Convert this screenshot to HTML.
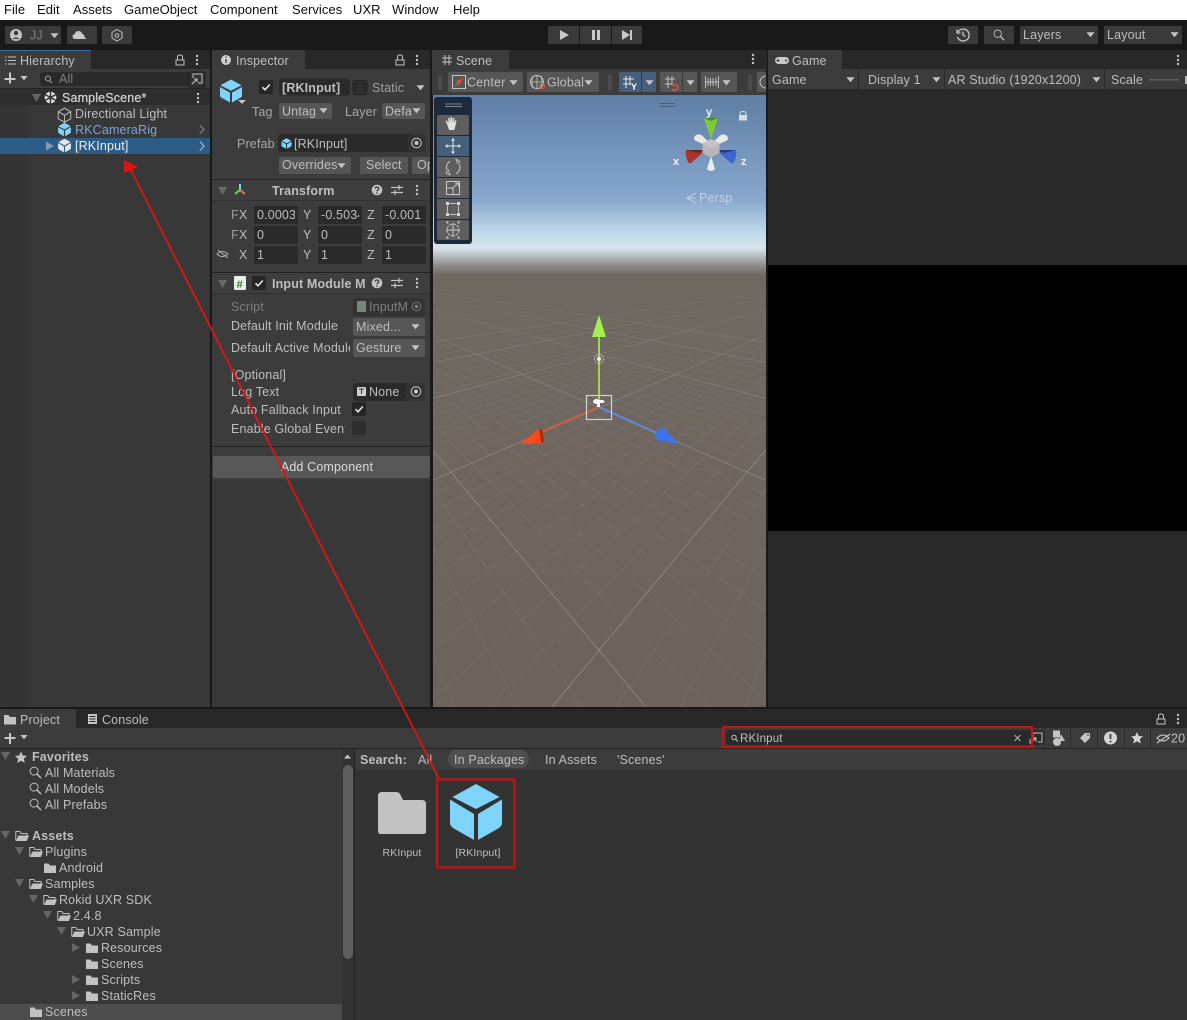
<!DOCTYPE html>
<html><head><meta charset="utf-8"><title>Unity</title>
<style>
html,body{margin:0;padding:0;background:#191919;width:1187px;height:1020px;overflow:hidden}
svg{position:absolute;left:0;top:0;display:block}
text{font-family:"Liberation Sans","DejaVu Sans",sans-serif;font-size:12.5px;fill:#bebebe;white-space:pre;letter-spacing:.15px}
.b{font-weight:bold}.d{fill:#808080}.m{font-size:13px;fill:#0c0c0c;letter-spacing:.05px}.s{font-size:10.5px}
</style></head><body>
<svg width="1187" height="1020" viewBox="0 0 1187 1020" xmlns="http://www.w3.org/2000/svg">
<defs>
<linearGradient id="sky" x1="0" y1="95" x2="0" y2="707" gradientUnits="userSpaceOnUse">
<stop offset="0" stop-color="#5f7ea6"/><stop offset=".17" stop-color="#88a7cd"/><stop offset=".225" stop-color="#c0d9ea"/><stop offset=".25" stop-color="#d8e6ec"/><stop offset=".278" stop-color="#8f8f8e"/><stop offset=".295" stop-color="#6f6861"/><stop offset="1" stop-color="#6c635c"/>
</linearGradient>
<linearGradient id="fade" x1="0" y1="270" x2="0" y2="430" gradientUnits="userSpaceOnUse"><stop offset="0" stop-color="#6f6861"/><stop offset=".25" stop-color="#6f6861" stop-opacity=".7"/><stop offset="1" stop-color="#6e655f" stop-opacity="0"/></linearGradient>
<clipPath id="scn"><rect x="433" y="274" width="333" height="433"/></clipPath>
<clipPath id="c1"><rect x="254" y="205" width="41" height="60"/></clipPath>
<clipPath id="c2"><rect x="318" y="205" width="41" height="60"/></clipPath>
<clipPath id="c3"><rect x="272" y="275" width="93" height="18"/></clipPath>
<clipPath id="c4"><rect x="231" y="340" width="119" height="16"/></clipPath>
<clipPath id="c5"><rect x="231" y="420" width="114" height="16"/></clipPath>
<clipPath id="c6"><rect x="212" y="155" width="218" height="20"/></clipPath>
<clipPath id="c7"><rect x="360" y="380" width="44" height="20"/></clipPath>
<clipPath id="c8"><rect x="369" y="298" width="39" height="18"/></clipPath>
<symbol id="cube" viewBox="0 0 24 24"><path fill="#7fd4fb" d="M12 .5 22.500 6.300 12 11.800 1.500 6.300ZM1 8 11 13.600V23.500L3 19Q1 18 1 16.500ZM23 8 13 13.600V23.500l8-4.500q2-1 2-2.500Z"/></symbol>
<symbol id="cubew" viewBox="0 0 24 24"><path fill="#e6e6e6" d="M12 .5 22.500 6.300 12 11.800 1.500 6.300ZM1 8 11 13.600V23.500L3 19Q1 18 1 16.500ZM23 8 13 13.600V23.500l8-4.500q2-1 2-2.500Z"/></symbol>
<symbol id="fo" viewBox="0 0 14 12"><path fill="#c2c2c2" d="M1 1.500h4.500L7 3.500h6V11H1Z"/></symbol>
<symbol id="fop" viewBox="0 0 14 12"><path fill="none" stroke="#c2c2c2" stroke-width="1" d="M.8 10.500V1.500h4l1.200 2h6v2"/><path fill="#c2c2c2" d="M3.500 5.500H14L11.800 11H.9Z"/></symbol>
<symbol id="mag" viewBox="0 0 14 14"><circle cx="5.500" cy="5.500" r="4.300" fill="none" stroke="#c4c4c4" stroke-width="1"/><path d="M8.800 8.800 13 13" stroke="#c4c4c4" stroke-width="1.500"/></symbol>
<symbol id="sl" viewBox="0 0 10 10"><path fill="#c4c4c4" d="M.5 2.500h9L5 8Z"/></symbol>
<symbol id="dots" viewBox="0 0 4 12"><circle cx="2" cy="2" r="1.200" fill="#c4c4c4"/><circle cx="2" cy="6" r="1.200" fill="#c4c4c4"/><circle cx="2" cy="10" r="1.200" fill="#c4c4c4"/></symbol>
<symbol id="lock" viewBox="0 0 10 12"><path fill="none" stroke="#c4c4c4" stroke-width="1" d="M1 6h8v5H1ZM2.500 6V2.800Q2.500 1 5 1t2.500 1.800V6"/></symbol>
<symbol id="help" viewBox="0 0 12 12"><circle cx="6" cy="6" r="5.300" fill="#c4c4c4"/><path d="M4.200 4.600Q4.300 3 6 3t1.800 1.500Q7.800 5.400 6.700 6 6 6.400 6 7.400" fill="none" stroke="#3c3c3c" stroke-width="1.300"/><circle cx="6" cy="9" r=".8" fill="#3c3c3c"/></symbol>
<symbol id="sliders" viewBox="0 0 12 12"><path stroke="#c4c4c4" stroke-width="1.200" fill="none" d="M0 3.500h12M0 8.500h12M8 1v5M4 6v5"/></symbol>
<symbol id="target" viewBox="0 0 12 12"><circle cx="6" cy="6" r="4.800" fill="none" stroke="#c4c4c4" stroke-width="1"/><circle cx="6" cy="6" r="2" fill="#c4c4c4"/></symbol>
<symbol id="chk" viewBox="0 0 14 14"><rect width="14" height="14" rx="2" fill="#262626"/><path d="M3.500 7.200 6 9.800 10.800 4.500" fill="none" stroke="#e4e4e4" stroke-width="1.600"/></symbol>
<g id="gridm"><path d="M915 270L872 707M915 270L808 707M915 270L744 707M915 270L680 707M915 270L616 707M915 270L488 707M915 270L424 707M915 270L360 707M915 270L296 707M915 270L232 707M915 270L168 707M915 270L104 707M915 270L40 707M915 270L-24 707M915 270L-152 707M915 270L-216 707M915 270L-280 707M915 270L-344 707M915 270L-408 707M915 270L-472 707M915 270L-536 707M915 270L-600 707M915 270L-664 707M915 270L-792 707M915 270L-920 707M915 270L-1050 707M915 270L-1200 707M915 270L-1550 707M915 270L-1800 707" stroke="#8d857f" stroke-opacity=".28" stroke-width="1" fill="none"/><path d="M915 270L552 707M915 270L-88 707M915 270L-728 707M915 270L-1368 707M915 270L-2008 707" stroke="#a29b95" stroke-opacity=".55" stroke-width="1" fill="none"/></g>
</defs>

<!-- base -->
<rect width="1187" height="1020" fill="#191919"/>
<rect width="1187" height="20" fill="#fff"/>
<text class="m" x="4" y="14">File</text><text class="m" x="37" y="14">Edit</text><text class="m" x="73" y="14">Assets</text><text class="m" x="124" y="14">GameObject</text><text class="m" x="210" y="14">Component</text><text class="m" x="292" y="14">Services</text><text class="m" x="353" y="14">UXR</text><text class="m" x="392" y="14">Window</text><text class="m" x="453" y="14">Help</text>

<!-- top toolbar -->
<rect x="5" y="26" width="56" height="18" rx="1" fill="#3a3a3a"/><circle cx="16" cy="35" r="6" fill="#c4c4c4"/><circle cx="16" cy="33" r="2.200" fill="#3a3a3a"/><path d="M12.500 39q3.500-3.500 7 0" fill="#3a3a3a"/><text x="30" y="39.500" class="d">JJ</text><use href="#sl" x="50" y="31" width="9" height="9"/>
<rect x="67" y="26" width="30" height="18" rx="1" fill="#3a3a3a"/><path fill="#c8c8c8" d="M75 40q-2.500-.200-2.500-2.500 0-2 2.200-2.500.800-3 3.800-3t3.800 3q2.200.500 2.200 2.500T87.500 40Z" transform="translate(0 -1)"/>
<rect x="102" y="26" width="30" height="18" rx="1" fill="#3a3a3a"/><path fill="none" stroke="#c4c4c4" d="M117 29.500l5 3v5.500l-5 3-5-3v-5.500Z"/><circle cx="117" cy="35.500" r="1.800" fill="none" stroke="#c4c4c4"/>
<rect x="548" y="26" width="31" height="18" fill="#3a3a3a"/><rect x="580" y="26" width="31" height="18" fill="#3a3a3a"/><rect x="612" y="26" width="30" height="18" fill="#3a3a3a"/>
<path fill="#c8c8c8" d="M560 30l9 5-9 5Z"/><path fill="#c8c8c8" d="M592 30h3v10h-3ZM597 30h3v10h-3Z"/><path fill="#c8c8c8" d="M622 30l8 5-8 5ZM630 30h2v10h-2Z"/>
<rect x="948" y="26" width="30" height="18" fill="#3a3a3a"/><path d="M958 32a6 6 0 1 1 -.500 5M957 29.500v3.500h3.500M963 31.500V35l2.500 1.500" fill="none" stroke="#c8c8c8" stroke-width="1.300"/>
<rect x="984" y="26" width="30" height="18" fill="#3a3a3a"/><use href="#mag" x="993" y="29" width="12" height="12"/>
<rect x="1020" y="26" width="78" height="18" fill="#3a3a3a"/><text x="1023" y="39">Layers</text><use href="#sl" x="1086" y="30" width="9" height="9"/>
<rect x="1104" y="26" width="78" height="18" fill="#3a3a3a"/><text x="1107" y="39">Layout</text><use href="#sl" x="1170" y="30" width="9" height="9"/>

<!-- hierarchy -->
<rect x="0" y="50" width="210" height="19" fill="#282828"/>
<rect x="0" y="51" width="91" height="18" fill="#3c3c3c"/><rect x="0" y="50" width="91" height="1" fill="#3a6fa6"/>
<path d="M8 57h8M8 60.500h8M8 64h8" stroke="#c4c4c4"/><path d="M5 57h1.500M5 60.500h1.500M5 64h1.500" stroke="#c4c4c4"/>
<text x="20" y="65">Hierarchy</text>
<use href="#lock" x="175" y="54" width="10" height="12"/><use href="#dots" x="195" y="54" width="4" height="12"/>
<rect x="0" y="69" width="210" height="20" fill="#3c3c3c"/><rect x="0" y="88" width="210" height="1" fill="#232323"/>
<path d="M10 72.500v11M4.500 79h11" stroke="#c8c8c8" stroke-width="2"/><use href="#sl" x="20" y="74" width="8" height="8"/>
<rect x="40" y="72" width="165" height="14" rx="3" fill="#2a2a2a"/><text x="59" y="83" class="d" font-size="11">All</text><circle cx="48" cy="78.500" r="2.500" fill="none" stroke="#aaa"/><path d="M50 81l2 2" stroke="#aaa"/>
<rect x="189" y="72" width="16" height="15" rx="1" fill="#333" stroke="#1f1f1f"/><path d="M193 78v-4h9v9h-4M192 84l5-5M194 79h3v3" stroke="#c4c4c4" fill="none"/>
<rect x="0" y="89" width="210" height="618" fill="#383838"/><rect x="0" y="89" width="28" height="618" fill="#343434"/>
<rect x="0" y="89" width="210" height="16" fill="#2e2e2e"/>
<path d="M32 94h9l-4.500 8Z" fill="#666"/>
<circle cx="50.500" cy="97.500" r="5.800" fill="#dedede"/><path d="M50.500 91.500v12M45 94.500l11 6M56 94.500l-11 6" stroke="#2e2e2e" stroke-width="1.400"/>
<text x="62" y="102" style="fill:#d2d2d2;stroke:#d2d2d2;stroke-width:.25">SampleScene*</text>
<use href="#dots" x="196" y="92" width="4" height="12"/>
<path d="M64.500 108.200l6.300 3.500v7l-6.300 3.500-6.300-3.500v-7Zm-6.300 3.500l6.300 3.500 6.300-3.500m-6.300 3.500v7.500" fill="none" stroke="#c4c4c4" stroke-width=".9"/>
<text x="75" y="118">Directional Light</text>
<use href="#cube" x="57.500" y="122" width="14" height="15"/><text x="75" y="134" style="fill:#79a5dc">RKCameraRig</text>
<path d="M200 125.500l4 4-4 4" stroke="#7b7b7b" stroke-width="1.300" fill="none"/>
<rect x="0" y="138" width="210" height="16" fill="#2c5d87"/>
<path d="M46 141.500l8 4.500-8 4.500Z" fill="#7e9cb6"/><use href="#cubew" x="57.500" y="138" width="14" height="15"/>
<text x="75" y="150" style="fill:#eee">[RKInput]</text>
<path d="M200 141.500l4 4.500-4 4.500" stroke="#9ab5cc" stroke-width="1.300" fill="none"/>

<!-- inspector -->
<rect x="212" y="50" width="218" height="19" fill="#282828"/><rect x="212" y="50" width="93" height="19" rx="1" fill="#3c3c3c"/>
<circle cx="226" cy="60" r="5" fill="#d0d0d0"/><path d="M226 59v4M226 56.500v1.300" stroke="#3c3c3c" stroke-width="1.300"/>
<text x="236" y="65">Inspector</text>
<use href="#lock" x="395" y="54" width="10" height="12"/><use href="#dots" x="415" y="54" width="4" height="12"/>
<rect x="212" y="69" width="218" height="638" fill="#3c3c3c"/>
<rect x="212" y="480" width="218" height="227" fill="#383838"/>
<use href="#cube" x="219" y="79" width="24" height="24"/><path d="M238 100h8l-4 4Z" fill="#c4c4c4"/>
<use href="#chk" x="259" y="80" width="14" height="14"/>
<rect x="279" y="78.500" width="71" height="17" rx="3" fill="#2a2a2a"/><text x="282" y="92" class="b">[RKInput]</text>
<rect x="353" y="80.500" width="14" height="14" rx="2" fill="#2d2d2d" stroke="#242424"/><text x="372" y="92" style="fill:#a0a0a0">Static</text><use href="#sl" x="416" y="83" width="9" height="9"/>
<text x="252" y="116" style="fill:#a8a8a8">Tag</text><rect x="279" y="103" width="53" height="16" rx="2" fill="#565656"/><text x="282" y="115.500">Untag</text><use href="#sl" x="319" y="106" width="9" height="9"/>
<text x="345" y="116" style="fill:#a8a8a8">Layer</text><rect x="382" y="103" width="43" height="16" rx="2" fill="#565656"/><text x="385" y="115.500">Defa</text><use href="#sl" x="412" y="106" width="9" height="9"/>
<text x="237" y="148" style="fill:#a8a8a8">Prefab</text><rect x="278" y="134" width="148" height="18" rx="3" fill="#2a2a2a"/><rect x="408" y="134" width="18" height="18" rx="3" fill="#323232"/><use href="#cube" x="281" y="138" width="11" height="11"/><text x="294" y="148">[RKInput]</text><use href="#target" x="410.500" y="137" width="12" height="12"/>
<rect x="279" y="157" width="72" height="17" rx="2" fill="#565656"/><text x="282" y="169">Overrides</text><use href="#sl" x="337" y="161" width="9" height="9"/>
<rect x="360" y="157" width="48" height="17" rx="2" fill="#565656"/><text x="366" y="169">Select</text>
<rect x="412" y="157" width="18" height="17" fill="#565656"/><text x="417" y="169" clip-path="url(#c6)">Op</text>

<rect x="212" y="179" width="218" height="1" fill="#232323"/><rect x="212" y="180" width="218" height="20" fill="#3e3e3e"/><rect x="212" y="200" width="218" height="1" fill="#303030"/>
<path d="M218 187h9l-4.500 8Z" fill="#6a6a6a"/>
<path d="M240 184v7" stroke="#75d4e8" stroke-width="2"/><path d="M240 190l-5 4" stroke="#6fcf6a" stroke-width="2"/><path d="M240 190l5 4" stroke="#e37650" stroke-width="2"/>
<text x="272" y="195" class="b">Transform</text>
<use href="#help" x="371" y="184" width="12" height="12"/><use href="#sliders" x="391" y="184" width="12" height="12"/><use href="#dots" x="415" y="184" width="4" height="12"/>

<text x="231" y="219" style="fill:#9a9a9a">F</text><text x="239" y="219">X</text><rect x="254" y="206" width="44" height="18" rx="2" fill="#2a2a2a"/><text x="257" y="219" clip-path="url(#c1)">0.0003</text>
<text x="303" y="219">Y</text><rect x="318" y="206" width="44" height="18" rx="2" fill="#2a2a2a"/><text x="321" y="219" clip-path="url(#c2)">-0.5034</text>
<text x="367" y="219">Z</text><rect x="382" y="206" width="44" height="18" rx="2" fill="#2a2a2a"/><text x="385" y="219">-0.001</text>
<text x="231" y="239" style="fill:#9a9a9a">F</text><text x="239" y="239">X</text><rect x="254" y="226" width="44" height="18" rx="2" fill="#2a2a2a"/><text x="257" y="239">0</text>
<text x="303" y="239">Y</text><rect x="318" y="226" width="44" height="18" rx="2" fill="#2a2a2a"/><text x="321" y="239">0</text>
<text x="367" y="239">Z</text><rect x="382" y="226" width="44" height="18" rx="2" fill="#2a2a2a"/><text x="385" y="239">0</text>
<path d="M217 254q5-5 11 0-6 5-11 0ZM218 250l10 8" stroke="#b0b0b0" stroke-width="1" fill="none"/>
<text x="239" y="259">X</text><rect x="254" y="246" width="44" height="18" rx="2" fill="#2a2a2a"/><text x="257" y="259">1</text>
<text x="303" y="259">Y</text><rect x="318" y="246" width="44" height="18" rx="2" fill="#2a2a2a"/><text x="321" y="259">1</text>
<text x="367" y="259">Z</text><rect x="382" y="246" width="44" height="18" rx="2" fill="#2a2a2a"/><text x="385" y="259">1</text>

<rect x="212" y="272" width="218" height="1" fill="#232323"/><rect x="212" y="273" width="218" height="20" fill="#3e3e3e"/><rect x="212" y="293" width="218" height="1" fill="#303030"/>
<path d="M218 280h9l-4.500 8Z" fill="#6a6a6a"/>
<rect x="234" y="276" width="12" height="14" rx="1" fill="#e8efe8"/><text x="236.500" y="288" class="b" style="fill:#2e7d32;font-size:11px">#</text>
<use href="#chk" x="252" y="276" width="14" height="14"/>
<text x="272" y="288" class="b" clip-path="url(#c3)">Input Module Manager</text>
<use href="#help" x="371" y="277" width="12" height="12"/><use href="#sliders" x="391" y="277" width="12" height="12"/><use href="#dots" x="415" y="277" width="4" height="12"/>

<text x="231" y="311" class="d">Script</text><rect x="353" y="298" width="72" height="18" rx="3" fill="#333"/><rect x="357" y="301" width="9" height="11" fill="#77857a"/><text x="369" y="311" class="d" clip-path="url(#c8)">InputModuleManager</text><use href="#target" x="411" y="301" width="11" height="11" opacity=".5"/>
<text x="231" y="330">Default Init Module</text><rect x="353" y="318" width="72" height="18" rx="2" fill="#565656"/><text x="356" y="331">Mixed...</text><use href="#sl" x="411" y="322" width="9" height="9"/>
<text x="231" y="352" clip-path="url(#c4)">Default Active Module</text><rect x="353" y="339" width="72" height="18" rx="2" fill="#565656"/><text x="356" y="352">Gesture</text><use href="#sl" x="411" y="343" width="9" height="9"/>
<text x="231" y="379">[Optional]</text>
<text x="231" y="396">Log Text</text><rect x="353" y="383" width="72" height="18" rx="3" fill="#2a2a2a"/><rect x="406" y="383" width="19" height="18" rx="3" fill="#333"/><rect x="357" y="387" width="9" height="9" rx="1" fill="#d0d0d0"/><path d="M359 389h5M361.500 389v5" stroke="#333"/><text x="369" y="396" clip-path="url(#c7)">None (Text)</text><use href="#target" x="410" y="385.500" width="12" height="12"/>
<text x="231" y="414">Auto Fallback Input</text><use href="#chk" x="352" y="402" width="14" height="14"/>
<text x="231" y="433" clip-path="url(#c5)">Enable Global Event Input</text><rect x="352" y="421" width="14" height="14" rx="2" fill="#2d2d2d"/>
<rect x="212" y="446" width="218" height="1" fill="#232323"/>
<rect x="213" y="456" width="217" height="22" rx="2" fill="#585858"/><text x="327" y="471" text-anchor="middle" style="fill:#dcdcdc">Add Component</text>

<!-- scene -->
<rect x="432" y="50" width="335" height="19" fill="#282828"/><rect x="432" y="50" width="77" height="19" rx="1" fill="#3c3c3c"/>
<path d="M442 58h10M442 62h10M445 55v10M449 55v10" stroke="#c4c4c4" stroke-width="1"/><text x="456" y="65">Scene</text>
<use href="#dots" x="751" y="53" width="4" height="12"/>
<rect x="432" y="69" width="335" height="26" fill="#3c3c3c"/>
<path d="M439 75v15M441 75v15M609 75v15M611 75v15M749 75v15M751 75v15" stroke="#5c5c5c"/>
<rect x="448" y="72" width="75" height="20" rx="2" fill="#565656"/><rect x="452.500" y="75.500" width="13" height="13" fill="none" stroke="#c4c4c4"/><path d="M455 86l8-8" stroke="#e0593a" stroke-width="1.200"/><circle cx="459" cy="82" r="1.700" fill="none" stroke="#e0593a"/><text x="467" y="86.500">Center</text><use href="#sl" x="509" y="78" width="9" height="9"/>
<rect x="527" y="72" width="72" height="20" rx="2" fill="#565656"/><circle cx="537" cy="82" r="6.500" fill="none" stroke="#c4c4c4"/><path d="M537 75.500v13M530.500 82h13M533 76q-2 6 0 12M541 76q2 6 0 12" fill="none" stroke="#c4c4c4" stroke-width=".8"/><circle cx="542" cy="86" r="2.500" fill="none" stroke="#e0593a" stroke-width="1.200"/><text x="547" y="86.500">Global</text><use href="#sl" x="584" y="78" width="9" height="9"/>
<rect x="619" y="72" width="22" height="20" rx="1" fill="#46607c"/><rect x="642" y="72" width="14" height="20" rx="1" fill="#46607c"/><path d="M623 79h11M623 84h8M626 76v12M630 76v9" stroke="#e8e8e8" stroke-width="1"/><text x="631" y="90" class="b" style="font-size:9px;fill:#fff">Y</text><use href="#sl" x="645" y="78" width="9" height="9"/>
<rect x="660" y="72" width="22" height="20" rx="1" fill="#565656"/><rect x="683" y="72" width="14" height="20" rx="1" fill="#565656"/><path d="M665 79h10M665 84h7M668 76v12M672 76v8" stroke="#c4c4c4"/><path d="M672 85h3q3 .500 3 2.500t-3 2.500h-3" fill="none" stroke="#e0593a" stroke-width="1.400"/><use href="#sl" x="686" y="78" width="9" height="9"/>
<rect x="701" y="72" width="36" height="20" rx="2" fill="#565656"/><path d="M705.500 76v12M718.500 76v12M705 82h14M708 78v8M710.500 78v8M713 78v8M716 78v8" stroke="#c4c4c4" stroke-width=".9"/><use href="#sl" x="722" y="78" width="9" height="9"/>
<rect x="757" y="72" width="10" height="20" fill="#565656"/><circle cx="766" cy="82" r="6" fill="none" stroke="#c4c4c4"/>

<rect x="433" y="95" width="333" height="612" fill="url(#sky)"/>
<g clip-path="url(#scn)"><use href="#gridm"/><use href="#gridm" transform="matrix(-1 0 0 1 1198 0)"/><rect x="433" y="270" width="333" height="160" fill="url(#fade)"/></g>
<rect x="766" y="69" width="2" height="638" fill="#1a1a1a"/>

<rect x="434" y="97" width="38" height="147" rx="3" fill="#1d2a3b"/>
<path d="M445 104h17M445 106.500h17" stroke="#7b8794"/>
<g fill="#5e5e5e"><rect x="437" y="115" width="32" height="20" rx="2"/><rect x="437" y="157" width="32" height="20"/><rect x="437" y="178" width="32" height="20"/><rect x="437" y="199" width="32" height="20"/><rect x="437" y="220" width="32" height="20" rx="2"/></g>
<rect x="437" y="136" width="32" height="20" fill="#46607c"/>
<path fill="#e0e0e0" d="M447 124l-1.500-3 1-.700 2 2.700-.500-5h1.500l.700 4.500.300-5.500h1.500l.200 5.500.800-4.700 1.400.200-.400 5 1.300-3 1.200.500-1.200 6-1.200 3.500h-5Z"/>
<path d="M453 139v13M446.500 146h13" stroke="#e4e4e4" stroke-width="1"/><path d="M453 138l2 2.500h-4ZM453 154l2-2.500h-4ZM445 146l2.500-2v4ZM461 146l-2.500-2v4Z" fill="#e4e4e4"/>
<path d="M447 170a6.500 6.500 0 0 1 3-8.500M459 164a6.500 6.500 0 0 1-3 9.500" fill="none" stroke="#c8c8c8" stroke-width="1"/><path d="M456 159l1.500 4.500 2.500-2ZM450 175l-1.500-5-2.500 3Z" fill="none" stroke="#c8c8c8" stroke-width=".8"/>
<rect x="446.500" y="181.500" width="13" height="13" fill="none" stroke="#c8c8c8"/><rect x="446.500" y="188" width="6.500" height="6.500" fill="none" stroke="#c8c8c8"/><path d="M452 189l6-6M455 183h3.500v3.500" fill="none" stroke="#c8c8c8"/>
<rect x="447.500" y="203.500" width="11" height="11" fill="none" stroke="#c8c8c8" stroke-dasharray="7 4" stroke-dashoffset="-2"/><path d="M446 202h3v3h-3ZM457 202h3v3h-3ZM446 213h3v3h-3ZM457 213h3v3h-3Z" fill="#d8d8d8"/>
<circle cx="453" cy="230" r="6" fill="none" stroke="#c8c8c8" stroke-dasharray="3 1"/><path d="M453 223v14M446 230h14" stroke="#c8c8c8"/><path d="M446 221l3 1-2 2ZM460 221l-3 1 2 2ZM446 239l3-1-2-2ZM460 239l-3-1 2-2Z" fill="#c8c8c8"/>

<!-- view gizmo -->
<path d="M659 103.500h16M659 106.500h16" stroke="#4d5f78"/>
<path d="M740 115.500v-2q0-2 3-2t3 2v2" fill="none" stroke="#d8dde2"/><rect x="739" y="115" width="8" height="5.500" fill="#d8dde2"/>
<text x="706" y="115.500" class="b" style="font-size:11px;fill:#e6edf4">y</text>
<path d="M704 118h14l-7 21Z" fill="#7ecb38"/><path d="M704 118h14l-7 3Z" fill="#4f8a24"/>
<path d="M695 136q3-3 7-.500l7 7-5 2-9-4Q693 138 695 136Z" fill="#e8e8e8"/><path d="M727 136q-3-3-7-.500l-7 7 5 2 9-4Q729 138 727 136Z" fill="#e8e8e8"/>
<path d="M686 150h20l-15 13q-2 1-3-1-3-6-2-12Z" fill="#a8342a"/><path d="M686 150h20l-8 3Z" fill="#6e241e"/>
<path d="M736 150h-20l15 13q2 1 3-1 3-6 2-12Z" fill="#3b68cd"/><path d="M736 150h-20l8 3Z" fill="#253e7c"/>
<path d="M711 156l-4 13q4 4 8 0Z" fill="#e9ecef"/>
<path d="M711 139l8.500 4.500v9.500l-8.500 4.500-8.500-4.500v-9.500Z" fill="#b8b8b8"/><path d="M702.500 143.500l8.500 4.500 8.500-4.500-8.500-4.500Z" fill="#c6c6c6"/>
<text x="673" y="165" class="b" style="font-size:11px;fill:#f0f0f0">x</text><text x="741" y="165" class="b" style="font-size:11px;fill:#f0f0f0">z</text>
<path d="M696 193l-9 5 9 5" fill="none" stroke="#c9d3df" stroke-width="1"/><path d="M687 198h9" stroke="#c9d3df"/><text x="699" y="202" style="fill:#c6d2e0">Persp</text>

<!-- transform gizmo -->
<path d="M599 335v70" stroke="#97d957" stroke-width="2"/>
<path d="M599 315l7 22h-14Z" fill="#a2ef4d"/>
<circle cx="599" cy="359" r="4.500" fill="none" stroke="#e0e4c8" stroke-width=".8" stroke-dasharray="1.500 1"/><circle cx="599" cy="359" r="2" fill="#f4f8d8"/>
<path d="M599 407l-58 25" stroke="#d8593f" stroke-width="2"/><path d="M599 407l60 27" stroke="#5f89e0" stroke-width="2"/>
<path d="M520 444l19-15q3 0 4 3l1 9q-1 2-3 2Z" fill="#ff4a18"/><path d="M539 429q3 0 4 3l1 9q-1 2-3 2Z" fill="#a8300f"/>
<path d="M678 444l-22-4q-2-3 0-6l4-6q3-1 4 0Z" fill="#3f73ee"/>
<rect x="586.500" y="395.500" width="25" height="24" fill="none" stroke="#d4d2cf" stroke-width="1.200"/>
<path d="M593 401q4-4 5-1h5q3 2 0 3h-3v4h-3v-3q-4 0-4-3Z" fill="#fff"/>

<!-- game -->
<rect x="768" y="50" width="419" height="19" fill="#282828"/><rect x="768" y="50" width="74" height="19" rx="1" fill="#3c3c3c"/>
<rect x="775" y="57" width="14" height="7" rx="3.500" fill="#c8c8c8"/><path d="M778 59v3M776.500 60.500h3" stroke="#3c3c3c"/><circle cx="786" cy="60.500" r="1" fill="#3c3c3c"/>
<text x="792" y="65">Game</text><use href="#dots" x="1176" y="54" width="4" height="12"/>
<rect x="768" y="69" width="419" height="20" fill="#3c3c3c"/><path d="M858.500 69v20M944.500 69v20M1104.500 69v20" stroke="#2a2a2a"/>
<text x="772" y="84">Game</text><use href="#sl" x="846" y="75" width="9" height="9"/>
<text x="868" y="84">Display 1</text><use href="#sl" x="932" y="75" width="9" height="9"/>
<text x="948" y="84">AR Studio (1920x1200)</text><use href="#sl" x="1092" y="75" width="9" height="9"/>
<text x="1111" y="84">Scale</text><rect x="1149" y="79" width="30" height="1.500" fill="#5e5e5e"/><rect x="1185" y="76" width="2" height="8" fill="#bbb"/>
<rect x="768" y="89" width="419" height="618" fill="#292929"/>
<rect x="768" y="265" width="419" height="266" fill="#000"/>

<!-- project -->
<rect x="0" y="707" width="1187" height="2" fill="#191919"/>
<rect x="0" y="709" width="1187" height="19" fill="#282828"/><rect x="0" y="709" width="76" height="19" rx="1" fill="#3c3c3c"/>
<use href="#fo" x="3" y="713.500" width="14" height="12"/><text x="20" y="724">Project</text>
<rect x="88" y="714" width="9" height="10" fill="#c4c4c4"/><path d="M89.500 716.500h6M89.500 719h6M89.500 721.500h6" stroke="#282828" stroke-width=".9"/><text x="102" y="724">Console</text>
<use href="#lock" x="1156" y="713" width="10" height="12"/><use href="#dots" x="1176" y="713" width="4" height="12"/>
<rect x="0" y="728" width="1187" height="20" fill="#3c3c3c"/><rect x="0" y="748" width="1187" height="1" fill="#232323"/>
<path d="M10 733v11M4.500 738h11" stroke="#c8c8c8" stroke-width="2"/><use href="#sl" x="20" y="733" width="8" height="8"/>
<rect x="726" y="730" width="318" height="15" rx="4" fill="#2a2a2a"/><circle cx="734" cy="737.500" r="2.200" fill="none" stroke="#c4c4c4"/><path d="M735.500 739l2.500 2.500" stroke="#c4c4c4" stroke-width="1.200"/><text x="740" y="742" style="font-size:11.500px">RKInput</text>
<path d="M1014.500 735l6 6M1020.500 735l-6 6" stroke="#b4b4b4"/>
<rect x="1044" y="728" width="1" height="20" fill="#2d2d2d"/><rect x="1070" y="728" width="1" height="20" fill="#2d2d2d"/><rect x="1097" y="728" width="1" height="20" fill="#2d2d2d"/><rect x="1124" y="728" width="1" height="20" fill="#2d2d2d"/><rect x="1150" y="728" width="1" height="20" fill="#2d2d2d"/>
<path d="M1033 737v-4h9v9h-4M1030 743.500l6-6M1032 738h4v4M1030 739v4" stroke="#c4c4c4" fill="none"/>
<rect x="1053" y="730.500" width="7" height="7" fill="#c4c4c4"/><circle cx="1057" cy="742" r="4" fill="#c4c4c4"/><path d="M1061 734l4 7h-6Z" fill="#c4c4c4"/>
<path d="M1080 738l5-5h5v5l-5 5Z" fill="#c4c4c4"/><circle cx="1088" cy="735" r=".9" fill="#3c3c3c"/>
<circle cx="1110.500" cy="738" r="6.500" fill="#d4d4d4"/><path d="M1110.500 734v5" stroke="#3c3c3c" stroke-width="1.800"/><circle cx="1110.500" cy="741.500" r="1" fill="#3c3c3c"/>
<path d="M1137 732l1.800 4 4.200.400-3.200 2.800 1 4.300-3.800-2.300-3.800 2.300 1-4.300-3.200-2.800 4.200-.400Z" fill="#d4d4d4"/>
<path d="M1157 738q6-6 12 0-6 6-12 0ZM1157 743l13-9" stroke="#c4c4c4" fill="none" stroke-width="1.200"/><text x="1171" y="742.500">20</text>

<rect x="0" y="749" width="342" height="271" fill="#383838"/><rect x="342" y="749" width="12" height="271" fill="#333"/>
<rect x="343" y="765" width="10" height="194" rx="5" fill="#5f5f5f"/><path d="M344 758.500h7l-3.500-4Z" fill="#c4c4c4"/>
<rect x="354" y="749" width="1" height="271" fill="#232323"/>
<rect x="355" y="749" width="832" height="21" fill="#3c3c3c"/><rect x="355" y="770" width="832" height="250" fill="#333"/>
<rect x="0" y="1004" width="342" height="16" fill="#4d4d4d"/>

<g fill="#666"><path d="M1 752h9l-4.500 8ZM1 831h9l-4.500 8ZM15 847h9l-4.500 8ZM15 879h9l-4.500 8ZM29 895h9l-4.500 8ZM43 911h9l-4.500 8ZM57 927h9l-4.500 8ZM72 943l8 4.500-8 4.500ZM72 975l8 4.500-8 4.500ZM72 991l8 4.500-8 4.500Z"/></g>
<path d="M21 751.500l1.800 4 4.200.400-3.200 2.800 1 4.300-3.800-2.300-3.800 2.300 1-4.300-3.200-2.800 4.200-.400Z" fill="#c4c4c4"/>
<text x="32" y="761" class="b">Favorites</text>
<use href="#mag" x="29" y="766" width="13" height="13"/><text x="45" y="777">All Materials</text>
<use href="#mag" x="29" y="782" width="13" height="13"/><text x="45" y="793">All Models</text>
<use href="#mag" x="29" y="798" width="13" height="13"/><text x="45" y="809">All Prefabs</text>
<use href="#fop" x="15" y="830" width="14" height="12"/><text x="32" y="840" class="b">Assets</text>
<use href="#fop" x="29" y="846" width="14" height="12"/><text x="45" y="856">Plugins</text>
<use href="#fo" x="43" y="862" width="14" height="12"/><text x="59" y="872">Android</text>
<use href="#fop" x="29" y="878" width="14" height="12"/><text x="45" y="888">Samples</text>
<use href="#fop" x="43" y="894" width="14" height="12"/><text x="59" y="904">Rokid UXR SDK</text>
<use href="#fop" x="57" y="910" width="14" height="12"/><text x="73" y="920">2.4.8</text>
<use href="#fop" x="71" y="926" width="14" height="12"/><text x="87" y="936">UXR Sample</text>
<use href="#fo" x="85" y="942" width="14" height="12"/><text x="101" y="952">Resources</text>
<use href="#fo" x="85" y="958" width="14" height="12"/><text x="101" y="968">Scenes</text>
<use href="#fo" x="85" y="974" width="14" height="12"/><text x="101" y="984">Scripts</text>
<use href="#fo" x="85" y="990" width="14" height="12"/><text x="101" y="1000">StaticRes</text>
<use href="#fo" x="29" y="1006" width="14" height="12"/><text x="45" y="1016">Scenes</text>

<text x="360" y="764" class="b">Search:</text><text x="418" y="764">All</text>
<rect x="448" y="750" width="81" height="18" rx="9" fill="#4f4f4f"/><text x="454" y="764">In Packages</text>
<text x="545" y="764">In Assets</text><text x="617" y="764">'Scenes'</text>

<path d="M378 796q0-4 4-4h14q3 0 4 2l3 6h19q4 0 4 4v28q0 2-3 2h-42q-3 0-3-3Z" fill="#c2c2c2"/>
<text x="402" y="856" text-anchor="middle" class="s">RKInput</text>
<path fill="#7fd4fb" d="M476 784 499.500 797 476 809 452.500 797ZM450 799.500 474 814V840L453 828Q450 826 450 822ZM502 799.500 478 814V840L499 828Q502 826 502 822Z"/>
<text x="478" y="856" text-anchor="middle" class="s">[RKInput]</text>

<!-- annotations -->
<rect x="437" y="779.500" width="77.500" height="88" fill="none" stroke="#c51212" stroke-width="2.200"/>
<rect x="723" y="727" width="309" height="20" fill="none" stroke="#c51212" stroke-width="2.200"/>
<path d="M131 170 439 779" stroke="#e01414" stroke-width="1.800"/>
<path d="M124 160l14 7-14 6Z" fill="#e01414"/>
</svg>
</body></html>
